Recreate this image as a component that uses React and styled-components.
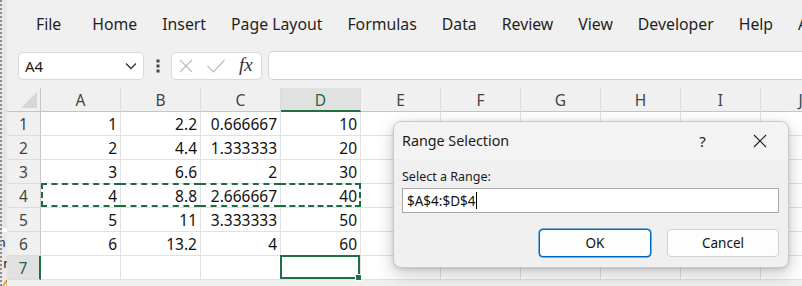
import styled, { createGlobalStyle } from "styled-components";

const GlobalStyle = createGlobalStyle`
    html, body {
        margin: 0;
        padding: 0;
        background: #f0f0f0;
        overflow: hidden;
    }
    body {
        font-family: "Noto Sans", "Open Sans", sans-serif;
        color: #1b1b1b;
    }
`;

const Screen = styled.div`
    position: relative;
    display: flex;
    width: 802px;
    height: 286px;
    overflow: hidden;
    background: #f0f0f0;
`;

// sliver of another window peeking at the left edge
const Sliver = styled.div`
    width: 7px;
    flex: none;
    display: flex;
    flex-direction: column;
    border-left: 2px dotted #8c8c8c;
    box-sizing: border-box;
    background: #e6e6e6;
`;

const SliverCode = styled.div`
    margin-top: auto;
    height: 54px;
    background: #e9e9e9;
    border-top: 4px solid #ffffff;
    font-family: "DejaVu Sans Mono", monospace;
    font-size: 13px;
    line-height: 21px;
    overflow: hidden;
    white-space: nowrap;
    text-indent: -4px;
    color: #222;
`;

const Orange = styled.span`
    color: #d07a10;
`;

const Excel = styled.div`
    flex: 1;
    display: flex;
    flex-direction: column;
    min-width: 0;
`;

const MenuBar = styled.div`
    flex: none;
    display: flex;
    align-items: center;
    height: 51px;
    padding-left: 29px;
    gap: 25px;
    font-size: 15.8px;
    white-space: nowrap;
`;

const MenuItem = styled.span`
    color: #1f1f1f;
    margin-right: ${p => (p.$wide ? "6px" : "0")};
    padding-bottom: 4px;
`;

const FormulaRow = styled.div`
    flex: none;
    display: flex;
    align-items: stretch;
    height: 29px;
`;

const NameBox = styled.div`
    margin-left: 11px;
    margin-top: 1px;
    width: 126px;
    box-sizing: border-box;
    background: #fff;
    border: 1px solid #d9d9d9;
    border-radius: 5px;
    display: flex;
    align-items: center;
    justify-content: space-between;
    padding: 0 6px 0 6px;
    font-size: 15px;
`;

const Grip = styled.div`
    width: 27px;
    display: flex;
    align-items: center;
    justify-content: center;
`;

const FxBox = styled.div`
    margin-top: 1px;
    width: 91px;
    box-sizing: border-box;
    background: #fff;
    border: 1px solid #d9d9d9;
    border-radius: 5px;
    display: flex;
    align-items: center;
    padding: 0 6px;
    gap: 12px;
`;

const FxText = styled.span`
    font-family: "Liberation Serif", "DejaVu Serif", serif;
    font-style: italic;
    font-size: 19px;
    color: #333;
    margin-left: 1px;
    line-height: 1;
    padding-bottom: 3px;
`;

const FormulaInput = styled.div`
    flex: 1;
    margin-left: 6px;
    background: #fff;
    border-top: 1px solid #d1d1d1;
    border-bottom: 1px solid #d1d1d1;
    border-left: 1px solid #d9d9d9;
    border-radius: 5px 0 0 5px;
`;

const Sheet = styled.div`
    flex: none;
    margin-top: 8px;
    display: grid;
    grid-template-columns: 34px repeat(10, 80px);
    grid-auto-rows: 24px;
    font-size: 15.5px;
`;

const Corner = styled.div`
    background: #f0f0f0;
    border-right: 1px solid #c6c6c6;
    border-bottom: 1px solid #c6c6c6;
    display: flex;
    align-items: flex-end;
    justify-content: flex-end;
    padding: 0 3px 3px 0;
`;

const ColHead = styled.div`
    display: flex;
    align-items: center;
    justify-content: center;
    background: ${p => (p.$active ? "#e1e1e1" : "#f0f0f0")};
    color: ${p => (p.$active ? "#1a6b3c" : "#444")};
    border-right: 1px solid #dcdcdc;
    border-bottom: ${p => (p.$active ? "2px solid #1e7145" : "1px solid #c6c6c6")};
    padding-top: ${p => (p.$active ? "1px" : "0")};
`;

const RowHead = styled.div`
    display: flex;
    align-items: center;
    justify-content: center;
    background: ${p => (p.$active ? "#e1e1e1" : "#f0f0f0")};
    color: ${p => (p.$active ? "#1a6b3c" : "#444")};
    border-right: ${p => (p.$active ? "2px solid #1e7145" : "1px solid #c6c6c6")};
    border-bottom: 1px solid #dcdcdc;
`;

const Cell = styled.div`
    position: relative;
    display: flex;
    align-items: center;
    justify-content: flex-end;
    padding-right: 3px;
    background: #fff;
    border-right: 1px solid #e1e1e1;
    border-bottom: 1px solid #e1e1e1;
    color: #111;
    white-space: nowrap;
`;

const Marquee = styled.div`
    position: absolute;
    left: ${p => (p.$start ? "0" : "-1px")};
    top: -1px;
    right: ${p => (p.$end ? "-1px" : "0")};
    bottom: 0;
    border-top: 2px dashed #1e6b41;
    border-bottom: 2px dashed #1e6b41;
    border-left: ${p => (p.$start ? "2px dashed #1e6b41" : "none")};
    border-right: ${p => (p.$end ? "2px dashed #1e6b41" : "none")};
    pointer-events: none;
`;

const ActiveBox = styled.div`
    position: absolute;
    left: -1px;
    top: -1px;
    right: 0;
    bottom: 0;
    border: 2px solid #1e7145;
`;

const Handle = styled.div`
    position: absolute;
    right: -4px;
    bottom: -4px;
    width: 5px;
    height: 5px;
    background: #1e7145;
    border: 1px solid #fff;
`;

const Dialog = styled.div`
    position: absolute;
    left: 393px;
    top: 121px;
    width: 396px;
    height: 147px;
    box-sizing: border-box;
    background: #f0f0f0;
    border: 1px solid #c9c9c9;
    border-radius: 8px;
    box-shadow: 0 6px 18px rgba(0, 0, 0, 0.22), 0 1px 4px rgba(0, 0, 0, 0.12);
    display: flex;
    flex-direction: column;
    overflow: hidden;
`;

const TitleBar = styled.div`
    height: 37px;
    display: flex;
    align-items: center;
    padding-left: 8px;
    background: #f3f3f3;
    font-size: 14.3px;
    color: #1b1b1b;
`;

const TitleText = styled.span`
    flex: 1;
`;

const TitleButton = styled.div`
    width: 57px;
    height: 37px;
    display: flex;
    align-items: center;
    justify-content: center;
    font-size: 15px;
    color: #222;
`;

const Body = styled.div`
    padding: 9px 9px 0 8px;
    display: flex;
    flex-direction: column;
`;

const Label = styled.div`
    font-size: 12.5px;
    color: #1b1b1b;
    margin-bottom: 3px;
`;

const RangeInput = styled.div`
    height: 25px;
    box-sizing: border-box;
    background: #fff;
    border: 1px solid #a8a8a8;
    display: flex;
    align-items: center;
    padding-left: 4px;
    font-size: 13.5px;
    color: #111;
`;

const Caret = styled.span`
    display: inline-block;
    width: 1px;
    height: 17px;
    background: #000;
    margin-left: 1px;
`;

const ButtonRow = styled.div`
    display: flex;
    justify-content: flex-end;
    gap: 16px;
    margin-top: 16px;
`;

const Button = styled.div`
    width: 112px;
    height: 28px;
    box-sizing: border-box;
    border-radius: 4px;
    background: #fdfdfd;
    border: 1px solid ${p => (p.$primary ? "#0067c0" : "#d0d0d0")};
    box-shadow: ${p => (p.$primary ? "0 0 0 0.5px #0067c0" : "none")};
    display: flex;
    align-items: center;
    justify-content: center;
    font-size: 13.5px;
    color: #111;
`;

const menu = ["Home", "Insert", "Page Layout", "Formulas", "Data", "Review", "View", "Developer", "Help", "Automate"];
const columns = ["A", "B", "C", "D", "E", "F", "G", "H", "I", "J"];
const data = [
    ["1", "2.2", "0.666667", "10"],
    ["2", "4.4", "1.333333", "20"],
    ["3", "6.6", "2", "30"],
    ["4", "8.8", "2.666667", "40"],
    ["5", "11", "3.333333", "50"],
    ["6", "13.2", "4", "60"],
    ["", "", "", ""],
];

function Chevron() {
    return (
        <svg width="12" height="8" viewBox="0 0 12 8">
            <path d="M1 1.5 L6 6.5 L11 1.5" fill="none" stroke="#333" strokeWidth="1.3" />
        </svg>
    );
}

function App() {
    return (
        <Screen>
            <GlobalStyle />
            <Sliver>
                <SliverCode>
                    n<br />r<br /><Orange>4</Orange>
                </SliverCode>
            </Sliver>
            <Excel>
                <MenuBar>
                    <MenuItem $wide>File</MenuItem>
                    {menu.map(m => <MenuItem key={m}>{m}</MenuItem>)}
                </MenuBar>
                <FormulaRow>
                    <NameBox>
                        <span>A4</span>
                        <Chevron />
                    </NameBox>
                    <Grip>
                        <svg width="4" height="14" viewBox="0 0 4 14">
                            <rect x="0.5" y="0.5" width="3" height="3" fill="#444" />
                            <rect x="0.5" y="5.5" width="3" height="3" fill="#444" />
                            <rect x="0.5" y="10.5" width="3" height="3" fill="#444" />
                        </svg>
                    </Grip>
                    <FxBox>
                        <svg width="16" height="16" viewBox="0 0 16 16">
                            <path d="M2 2 L14 14 M14 2 L2 14" stroke="#bdbdbd" strokeWidth="1.2" fill="none" />
                        </svg>
                        <svg width="20" height="16" viewBox="0 0 20 16">
                            <path d="M1.5 8 L7.5 14 L18.5 2" stroke="#bdbdbd" strokeWidth="1.2" fill="none" />
                        </svg>
                        <FxText>fx</FxText>
                    </FxBox>
                    <FormulaInput />
                </FormulaRow>
                <Sheet>
                    <Corner>
                        <svg width="16" height="16" viewBox="0 0 16 16">
                            <path d="M16 0 L16 16 L0 16 Z" fill="#d6d6d6" />
                        </svg>
                    </Corner>
                    {columns.map(c => (
                        <ColHead key={c} $active={c === "D"}>{c}</ColHead>
                    ))}
                    {data.map((row, r) => [
                        <RowHead key={"h" + r} $active={r === 6}>{r + 1}</RowHead>,
                        ...columns.map((c, ci) => (
                            <Cell key={r + c}>
                                {row[ci] || ""}
                                {r === 3 && ci < 4 && <Marquee $start={ci === 0} $end={ci === 3} />}
                                {r === 6 && ci === 3 && (
                                    <ActiveBox>
                                        <Handle />
                                    </ActiveBox>
                                )}
                            </Cell>
                        )),
                    ])}
                </Sheet>
            </Excel>
            <Dialog>
                <TitleBar>
                    <TitleText>Range Selection</TitleText>
                    <TitleButton>?</TitleButton>
                    <TitleButton>
                        <svg width="14" height="14" viewBox="0 0 14 14">
                            <path d="M1 1 L13 13 M13 1 L1 13" stroke="#222" strokeWidth="1.2" fill="none" />
                        </svg>
                    </TitleButton>
                </TitleBar>
                <Body>
                    <Label>Select a Range:</Label>
                    <RangeInput>
                        $A$4:$D$4<Caret />
                    </RangeInput>
                    <ButtonRow>
                        <Button $primary>OK</Button>
                        <Button>Cancel</Button>
                    </ButtonRow>
                </Body>
            </Dialog>
        </Screen>
    );
}

export default App;
